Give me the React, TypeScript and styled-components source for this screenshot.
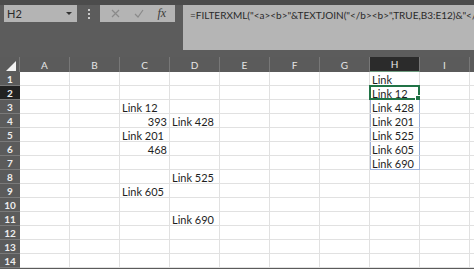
import { createGlobalStyle, styled } from "styled-components";

const GlobalStyle = createGlobalStyle`
  html, body {
    margin: 0;
    padding: 0;
    background: #5b5b5b;
    overflow: hidden;
  }
  body {
    font-family: Lato, "Open Sans", sans-serif;
  }
`;

const COLS = ["A", "B", "C", "D", "E", "F", "G", "H", "I", ""];
const ROWS = 14;

type Cell = { text: string; right?: boolean };

const cells: Record<string, Cell> = {
  H1: { text: "Link" },
  H2: { text: "Link 12" },
  C3: { text: "Link 12" },
  H3: { text: "Link 428" },
  C4: { text: "393", right: true },
  D4: { text: "Link 428" },
  H4: { text: "Link 201" },
  C5: { text: "Link 201" },
  H5: { text: "Link 525" },
  C6: { text: "468", right: true },
  H6: { text: "Link 605" },
  H7: { text: "Link 690" },
  D8: { text: "Link 525" },
  C9: { text: "Link 605" },
  D11: { text: "Link 690" },
};

const TopStrip = styled.div`
  height: 5px;
  background: #4c4c4c;
`;

const Toolbar = styled.div`
  display: flex;
  align-items: flex-start;
  height: 45px;
  padding-left: 4px;
  background: #5c5c5c;
`;

const NameBox = styled.div`
  width: 73px;
  height: 17px;
  box-sizing: border-box;
  background: #b4b4b4;
  display: flex;
  align-items: center;
  justify-content: space-between;
  padding: 0 5px 0 3px;
  font-size: 11px;
  color: #2a2a2a;
`;

const DropArrow = styled.span`
  width: 0;
  height: 0;
  border-left: 3px solid transparent;
  border-right: 3px solid transparent;
  border-top: 3px solid #333;
`;

const Grip = styled.div`
  width: 23px;
  height: 17px;
  display: flex;
  flex-direction: column;
  align-items: center;
  justify-content: center;
  gap: 2px;
`;

const GripDot = styled.span`
  width: 2px;
  height: 2px;
  background: #c8c8c8;
`;

const FuncBox = styled.div`
  width: 75px;
  height: 17px;
  background: #b4b4b4;
  display: flex;
  align-items: center;
  justify-content: space-around;
  padding: 0 2px 0 4px;
  box-sizing: border-box;
`;

const Fx = styled.span`
  font-family: "Liberation Serif", serif;
  font-style: italic;
  font-size: 12px;
  color: #3a3a3a;
`;

const FormulaBox = styled.div`
  margin-left: 8px;
  flex: 1;
  min-width: 0;
  height: 45px;
  background: #b5b5b5;
  padding: 4px 0 0 7px;
  box-sizing: border-box;
  font-size: 10px;
  color: #2a2a2a;
  white-space: nowrap;
  overflow: hidden;
`;

const Spacer = styled.div`
  height: 7px;
  background: #5c5c5c;
`;

const Sheet = styled.div`
  display: grid;
  grid-template-columns: 20px repeat(9, 50px) 24px;
  grid-template-rows: 15px repeat(${ROWS}, 14px);
  background: #ffffff;
`;

const ColHead = styled.div<{ $sel?: boolean }>`
  background: ${(p) => (p.$sel ? "#2b2b2b" : "#5b5b5b")};
  border-right: 1px solid #777;
  ${(p) => (p.$sel ? "border-bottom: 1px solid #6d9a7e;" : "")}
  box-sizing: border-box;
  color: #e6e6e6;
  font-size: 10px;
  display: flex;
  align-items: center;
  justify-content: center;
`;

const Corner = styled.div`
  background: #5b5b5b;
  border-right: 1px solid #777;
  box-sizing: border-box;
  display: flex;
  align-items: flex-end;
  justify-content: flex-end;
  padding: 0 3px 1px 0;
`;

const RowHead = styled.div<{ $sel?: boolean }>`
  background: ${(p) => (p.$sel ? "#222" : "#5b5b5b")};
  border-bottom: 1px solid #7a7a7a;
  box-sizing: border-box;
  color: #ededed;
  font-size: 10px;
  font-weight: 700;
  display: flex;
  align-items: center;
  justify-content: center;
`;

const CellBox = styled.div<{ $right?: boolean; $spillLeft?: boolean; $spillBottom?: boolean; $spillRight?: boolean }>`
  position: relative;
  border-right: 1px solid #e1e1e1;
  border-bottom: 1px solid #e1e1e1;
  box-sizing: border-box;
  font-size: 11px;
  color: #1e1e1e;
  display: flex;
  align-items: center;
  justify-content: ${(p) => (p.$right ? "flex-end" : "flex-start")};
  padding: 1px 2px 0;
  white-space: nowrap;
  overflow: visible;
  ${(p) => (p.$spillLeft ? "box-shadow: inset 1px 0 0 #9fb4dc;" : "")}
  ${(p) => (p.$spillRight ? "border-right-color: #9fb4dc;" : "")}
  ${(p) => (p.$spillBottom ? "border-bottom-color: #9fb4dc;" : "")}
`;

const Selection = styled.div`
  position: absolute;
  left: -1px;
  top: -1px;
  right: -1px;
  bottom: -1px;
  border: 2px solid #217346;
  pointer-events: none;
`;

const Handle = styled.span`
  position: absolute;
  right: -3px;
  bottom: -3px;
  width: 4px;
  height: 4px;
  background: #217346;
  border: 1px solid #fff;
`;

function CrossIcon() {
  return (
    <svg width="9" height="9" viewBox="0 0 9 9">
      <path d="M1 1L8 8M8 1L1 8" stroke="#8a8a8a" strokeWidth="1.2" />
    </svg>
  );
}

function CheckIcon() {
  return (
    <svg width="10" height="9" viewBox="0 0 10 9">
      <path d="M1 5L4 8L9 1" stroke="#8a8a8a" strokeWidth="1.2" fill="none" />
    </svg>
  );
}

function CornerIcon() {
  return (
    <svg width="10" height="10" viewBox="0 0 10 10">
      <polygon points="10,0 10,10 0,10" fill="#f2f2f2" />
    </svg>
  );
}

export default function App() {
  return (
    <>
      <GlobalStyle />
      <TopStrip />
      <Toolbar>
        <NameBox>
          H2
          <DropArrow />
        </NameBox>
        <Grip>
          <GripDot />
          <GripDot />
          <GripDot />
        </Grip>
        <FuncBox>
          <CrossIcon />
          <CheckIcon />
          <Fx>fx</Fx>
        </FuncBox>
        <FormulaBox>
          =FILTERXML("&lt;a&gt;&lt;b&gt;"&amp;TEXTJOIN("&lt;/b&gt;&lt;b&gt;",TRUE,B3:E12)&amp;"&lt;/b&gt;&lt;/a&gt;","//b")
        </FormulaBox>
      </Toolbar>
      <Spacer />
      <Sheet>
        <Corner>
          <CornerIcon />
        </Corner>
        {COLS.map((c, i) => (
          <ColHead key={i} $sel={c === "H"}>
            {c}
          </ColHead>
        ))}
        {Array.from({ length: ROWS }, (_, r) => {
          const row = r + 1;
          return [
            <RowHead key={`h${row}`} $sel={row === 2}>
              {row}
            </RowHead>,
            ...COLS.map((c, i) => {
              const cell = cells[`${c}${row}`];
              const inSpill = c === "H" && row >= 2 && row <= 7;
              return (
                <CellBox
                  key={`${row}-${i}`}
                  $right={cell?.right}
                  $spillLeft={inSpill}
                  $spillRight={inSpill}
                  $spillBottom={c === "H" && row === 7}
                >
                  {cell?.text}
                  {c === "H" && row === 2 && (
                    <Selection>
                      <Handle />
                    </Selection>
                  )}
                </CellBox>
              );
            }),
          ];
        })}
      </Sheet>
    </>
  );
}
